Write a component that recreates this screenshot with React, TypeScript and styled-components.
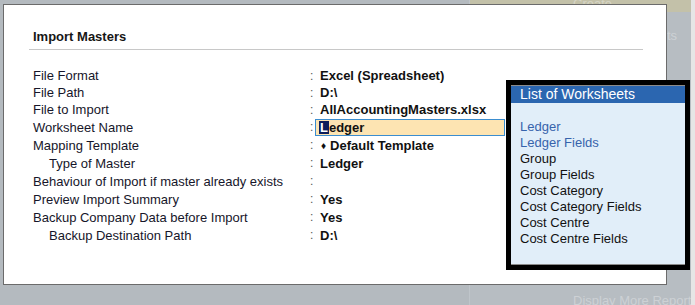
import React from 'react';
import styled, { createGlobalStyle } from 'styled-components';

interface Field {
  label: string;
  value?: string;
  indent?: boolean;
  compact?: boolean;
  kind?: 'text' | 'editing' | 'template';
}

const fields: Field[] = [
  { label: 'File Format', value: 'Excel (Spreadsheet)', compact: true },
  { label: 'File Path', value: 'D:\\', compact: true },
  { label: 'File to Import', value: 'AllAccountingMasters.xlsx', compact: true },
  { label: 'Worksheet Name', value: 'Ledger', kind: 'editing' },
  { label: 'Mapping Template', value: 'Default Template', kind: 'template' },
  { label: 'Type of Master', value: 'Ledger', indent: true },
  { label: 'Behaviour of Import if master already exists' },
  { label: 'Preview Import Summary', value: 'Yes' },
  { label: 'Backup Company Data before Import', value: 'Yes' },
  { label: 'Backup Destination Path', value: 'D:\\', indent: true },
];

const worksheets = [
  { name: 'Ledger', current: true },
  { name: 'Ledger Fields', current: true },
  { name: 'Group' },
  { name: 'Group Fields' },
  { name: 'Cost Category' },
  { name: 'Cost Category Fields' },
  { name: 'Cost Centre' },
  { name: 'Cost Centre Fields' },
];

const App: React.FC = () => {
  return (
    <>
      <GlobalStyle />
      <Page>
        <LeftPane />
        <RightPane>
          <TopStrip>Create</TopStrip>
          <FaintText>Reports</FaintText>
          <BottomText>Display More Reports</BottomText>
        </RightPane>
        <EdgePane />

        <Dialog>
          <Title>Import Masters</Title>
          <Form>
            {fields.map(f => (
              <Row key={f.label} compact={f.compact}>
                <Label indent={f.indent}>{f.label}</Label>
                <Colon>:</Colon>
                {f.kind === 'editing' ? (
                  <EditBox>
                    <Cursor>{f.value!.charAt(0)}</Cursor>
                    {f.value!.slice(1)}
                  </EditBox>
                ) : f.kind === 'template' ? (
                  <Value>
                    <Diamond>♦</Diamond>
                    {f.value}
                  </Value>
                ) : (
                  <Value>{f.value}</Value>
                )}
              </Row>
            ))}
          </Form>
        </Dialog>

        <Popup>
          <PopupHeader>List of Worksheets</PopupHeader>
          <PopupBody>
            {worksheets.map(w => (
              <PopupItem key={w.name} current={w.current}>
                {w.name}
              </PopupItem>
            ))}
          </PopupBody>
        </Popup>
      </Page>
    </>
  );
};

const GlobalStyle = createGlobalStyle`
  html, body {
    margin: 0;
    padding: 0;
    background: #b5bbc0;
  }
  body {
    font-family: "Liberation Sans", Arial, sans-serif;
  }
`;

const Page = styled.div`
  position: relative;
  width: 695px;
  height: 305px;
  overflow: hidden;
  display: grid;
  grid-template-columns: 469px 222px 4px;
  background: #b5bbc0;
  font-family: "Liberation Sans", Arial, sans-serif;
`;

const LeftPane = styled.div`
  background: #b4babf;
`;

const RightPane = styled.div`
  display: flex;
  flex-direction: column;
  background: #b7bdc2;
  border-left: 1px solid #bfc5ca;
`;

const TopStrip = styled.div`
  height: 12px;
  background: #c3c1a9;
  color: #d6d5c6;
  font-size: 13px;
  line-height: 8px;
  padding-left: 103px;
  overflow: hidden;
`;

const FaintText = styled.div`
  margin-top: 16px;
  align-self: flex-end;
  padding-right: 14px;
  color: #cdd1d5;
  font-size: 13px;
`;

const BottomText = styled.div`
  margin-top: auto;
  padding-left: 103px;
  white-space: nowrap;
  color: #cdd1d5;
  font-size: 13px;
  line-height: 14px;
  margin-bottom: -3px;
`;

const EdgePane = styled.div`
  background: #e6e6e6;
`;

const Dialog = styled.div`
  position: absolute;
  left: 3px;
  top: 4px;
  width: 664px;
  height: 281px;
  box-sizing: border-box;
  border: 1px solid #6b6b6b;
  background: #ffffff;
  padding: 24px 23px 0 25px;
`;

const Title = styled.div`
  font-size: 13px;
  font-weight: bold;
  line-height: 16px;
  color: #161616;
  padding: 0 0 4px 4px;
  border-bottom: 1px solid #c8c8c8;
`;

const Form = styled.div`
  margin-top: 17px;
  padding-left: 4px;
  display: flex;
  flex-direction: column;
`;

const Row = styled.div<{ compact?: boolean }>`
  display: grid;
  grid-template-columns: 277px 10px 1fr;
  align-items: center;
  height: ${p => (p.compact ? '17px' : '18px')};
  font-size: 13px;
`;

const Label = styled.div<{ indent?: boolean }>`
  padding-left: ${p => (p.indent ? '16px' : '0')};
  color: #16162a;
  white-space: nowrap;
`;

const Colon = styled.div`
  color: #5a5a5a;
  font-size: 12px;
`;

const Value = styled.div`
  font-weight: bold;
  color: #111111;
  white-space: nowrap;
`;

const Diamond = styled.span`
  font-size: 10px;
  margin: 0 4px 0 1px;
  position: relative;
  top: -1px;
`;

const EditBox = styled.div`
  margin-left: -5px;
  width: 190px;
  height: 17px;
  box-sizing: border-box;
  padding-left: 3px;
  border: 1px solid #3b8dcf;
  background: #fde4b2;
  font-weight: bold;
  color: #111111;
  line-height: 15px;
  white-space: nowrap;
`;

const Cursor = styled.span`
  display: inline-block;
  background: #0d1d5a;
  color: #ffffff;
  padding: 0 1px;
  line-height: 13px;
`;

const Popup = styled.div`
  position: absolute;
  left: 506px;
  top: 80px;
  width: 184px;
  height: 190px;
  box-sizing: border-box;
  border: 5px solid #000000;
  display: flex;
  flex-direction: column;
  background: #e1eef9;
`;

const PopupHeader = styled.div`
  height: 18px;
  box-sizing: border-box;
  border-top: 1px solid #8c8c8c;
  background: #2b66b0;
  color: #ffffff;
  font-size: 14px;
  line-height: 16px;
  padding-left: 9px;
  white-space: nowrap;
`;

const PopupBody = styled.div`
  flex: 1;
  padding-top: 16px;
  border-bottom: 1px solid #8a8a8a;
`;

const PopupItem = styled.div<{ current?: boolean }>`
  height: 16px;
  line-height: 16px;
  padding-left: 9px;
  font-size: 13px;
  color: ${p => (p.current ? '#3763ac' : '#111111')};
  white-space: nowrap;
`;

export default App;
